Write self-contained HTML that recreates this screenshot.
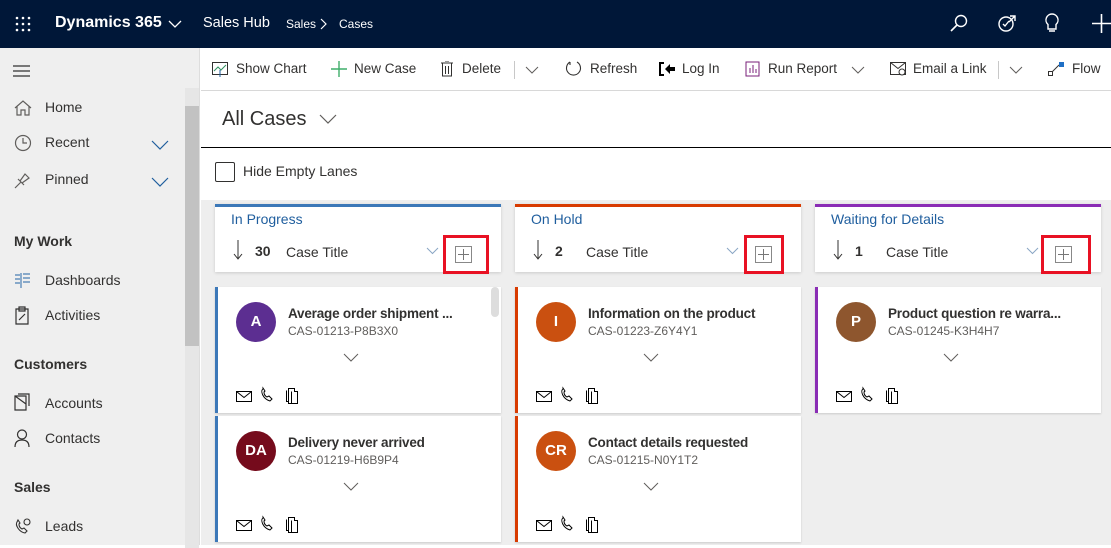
<!DOCTYPE html>
<html><head><meta charset="utf-8"><style>
*{margin:0;padding:0;box-sizing:border-box}
body{width:1111px;height:545px;overflow:hidden;position:relative;font-family:"Segoe UI","Liberation Sans",sans-serif;background:#fff;color:#323130}
.a{position:absolute}
.top{left:0;top:0;width:1111px;height:48px;background:#001738;color:#fff}
.side{left:0;top:48px;width:200px;height:497px;background:#efefef;border-right:1px solid #ddd}
.nav{position:absolute;left:45px;font-size:14px;color:#323130}
.sec{position:absolute;left:14px;font-size:14px;font-weight:bold;color:#323130}
.ico{position:absolute;left:14px}
.tb{left:201px;top:48px;width:910px;height:43px;border-bottom:1px solid #d8d8d8;font-size:13.5px}
.tb span{position:absolute;top:13px;white-space:nowrap}
.board{left:201px;top:200px;width:910px;height:345px;background:#eeeeee}
.lh{position:absolute;width:286px;height:68px;background:#fff;box-shadow:0 1px 3px rgba(0,0,0,.15)}
.lh .t{position:absolute;left:16px;top:4px;font-size:14px;color:#1f5e9e}
.lh .ar{position:absolute;left:18px;top:33px}
.lh .n{position:absolute;left:40px;top:36px;font-size:14px;font-weight:bold}
.lh .ct{position:absolute;left:71px;top:37px;font-size:14px}
.lh .dd{position:absolute;left:211px;top:40px}
.lh .rb{position:absolute;left:228px;top:28px;width:46px;height:39px;border:3px solid #e81123}
.lh .pl{position:absolute;left:240px;top:39px;width:17px;height:17px;border:1px solid #888}
.card{position:absolute;width:286px;height:126px;background:#fff;box-shadow:0 1px 2px rgba(0,0,0,.15)}
.av{position:absolute;left:18px;top:15px;width:40px;height:40px;border-radius:50%;color:#fff;font-weight:bold;font-size:15px;text-align:center;line-height:40px}
.ttl{position:absolute;left:70px;top:19px;font-size:13.5px;font-weight:bold;color:#323130;white-space:nowrap;letter-spacing:-0.2px}
.id{position:absolute;left:70px;top:37px;font-size:12px;color:#605e5c}
.cv{position:absolute;left:125px;top:66px}
.ic{position:absolute;top:99px;left:17px}
</style></head><body>
<div class="a top">
 <svg class="a" style="left:15px;top:16px" width="16" height="16"><g fill="#fff"><circle cx="2" cy="2" r="1.3"/><circle cx="8" cy="2" r="1.3"/><circle cx="14" cy="2" r="1.3"/><circle cx="2" cy="8" r="1.3"/><circle cx="8" cy="8" r="1.3"/><circle cx="14" cy="8" r="1.3"/><circle cx="2" cy="14" r="1.3"/><circle cx="8" cy="14" r="1.3"/><circle cx="14" cy="14" r="1.3"/></g></svg>
 <div class="a" style="left:55px;top:14px;font-size:16px;font-weight:bold">Dynamics 365</div>
 <svg class="a" style="left:168px;top:20px" width="14" height="9"><path d="M1 1l6 6 6-6" stroke="#fff" fill="none" stroke-width="1.3"/></svg>
 <div class="a" style="left:203px;top:15px;font-size:14.5px">Sales Hub</div>
 <div class="a" style="left:286px;top:17px;font-size:12px">Sales</div>
 <svg class="a" style="left:320px;top:18px" width="8" height="12"><path d="M1 1l5 5-5 5" stroke="#fff" fill="none" stroke-width="1.2"/></svg>
 <div class="a" style="left:339px;top:17px;font-size:12px">Cases</div>
 <svg class="a" style="left:950px;top:14px" width="18" height="18"><circle cx="11" cy="7" r="5.5" stroke="#fff" fill="none" stroke-width="1.4"/><path d="M7 11L1 17" stroke="#fff" stroke-width="1.6"/></svg>
 <svg class="a" style="left:997px;top:13px" width="20" height="20"><circle cx="9" cy="11" r="7" stroke="#fff" fill="none" stroke-width="1.4"/><path d="M6 11l2 2 4-5M13 3h5v5M18 3l-6 6" stroke="#fff" fill="none" stroke-width="1.4"/></svg>
 <svg class="a" style="left:1044px;top:13px" width="16" height="20"><path d="M8 1a6 6 0 0 0-4 10.5V16h8v-4.5A6 6 0 0 0 8 1zM5 18h6" stroke="#fff" fill="none" stroke-width="1.4"/></svg>
 <svg class="a" style="left:1092px;top:14px" width="19" height="19"><path d="M9.5 0v19M0 9.5h19" stroke="#fff" stroke-width="1.6"/></svg>
</div>
<div class="a side">
 <svg class="a" style="left:13px;top:17px" width="18" height="12"><path d="M0 1h17M0 6h17M0 11h17" stroke="#323130" stroke-width="1.2"/></svg>
 <div class="a" style="left:185px;top:40px;width:14px;height:460px;background:#e6e6e6"></div>
 <div class="a" style="left:185px;top:58px;width:14px;height:240px;background:#c2c2c2"></div>
 <svg class="ico" style="top:52px" width="18" height="16"><path d="M1 8L9 1l8 7M3 6v9h4v-5h4v5h4V6" stroke="#605e5c" fill="none" stroke-width="1.2"/></svg>
 <div class="nav" style="top:51px">Home</div>
 <svg class="ico" style="top:86px" width="18" height="18"><circle cx="9" cy="9" r="7.5" stroke="#605e5c" fill="none" stroke-width="1.2"/><path d="M9 4v5h4" stroke="#605e5c" fill="none" stroke-width="1.2"/></svg>
 <div class="nav" style="top:86px">Recent</div>
 <svg class="a" style="left:151px;top:92px" width="18" height="10"><path d="M1 1l8 8 8-8" stroke="#1f5e9e" fill="none" stroke-width="1.2"/></svg>
 <svg class="ico" style="top:123px" width="18" height="18"><path d="M1 17l6-6M4 8l6 6M6 10l5-7 4 4-7 5" stroke="#605e5c" fill="none" stroke-width="1.2"/></svg>
 <div class="nav" style="top:123px">Pinned</div>
 <svg class="a" style="left:151px;top:129px" width="18" height="10"><path d="M1 1l8 8 8-8" stroke="#1f5e9e" fill="none" stroke-width="1.2"/></svg>
 <div class="sec" style="top:185px">My Work</div>
 <svg class="ico" style="top:224px" width="17" height="17"><path d="M1 3h5M1 7h5M9 2h7M9 6h7M9 10h7M1 11h5M7 1v15" stroke="#4a7fb5" fill="none" stroke-width="1.2"/></svg>
 <div class="nav" style="top:224px">Dashboards</div>
 <svg class="ico" style="top:258px" width="16" height="19"><path d="M2 3h12v15H2zM5 1h6v4H5zM5 14l6-6" stroke="#323130" fill="none" stroke-width="1.2"/></svg>
 <div class="nav" style="top:259px">Activities</div>
 <div class="sec" style="top:308px">Customers</div>
 <svg class="ico" style="top:345px" width="16" height="18"><path d="M1 3h11v14H1zM4 1h11v12M1 3l11 8" stroke="#323130" fill="none" stroke-width="1.2"/></svg>
 <div class="nav" style="top:347px">Accounts</div>
 <svg class="ico" style="top:381px" width="16" height="18"><circle cx="8" cy="5.5" r="4.5" stroke="#323130" fill="none" stroke-width="1.2"/><path d="M1 18c0-5 3-7 7-7s7 2 7 7" stroke="#323130" fill="none" stroke-width="1.2"/></svg>
 <div class="nav" style="top:382px">Contacts</div>
 <div class="sec" style="top:431px">Sales</div>
 <svg class="ico" style="top:469px" width="18" height="18"><path d="M3 5c-2 3 2 10 8 11l2-2-3-3-2 1c-2-1-3-3-3-5l1-1-2-3z" stroke="#323130" fill="none" stroke-width="1.1"/><circle cx="13" cy="5" r="3" stroke="#323130" fill="none" stroke-width="1.1"/></svg>
 <div class="nav" style="top:470px">Leads</div>
</div>
<div class="a tb">
 <svg class="a" style="left:11px;top:14px" width="16" height="16"><rect x="0.5" y="0.5" width="15" height="12" stroke="#323130" fill="none"/><path d="M2 9l4-4 3 3 5-5" stroke="#2f8f5f" fill="none"/><path d="M8 15V8" stroke="#1f5e9e"/></svg>
 <span style="left:35px">Show Chart</span>
 <svg class="a" style="left:130px;top:13px" width="16" height="16"><path d="M8 0v16M0 8h16" stroke="#3fae6a" stroke-width="1.4"/></svg>
 <span style="left:153px">New Case</span>
 <svg class="a" style="left:240px;top:13px" width="12" height="16"><path d="M0 2h12M4 0h4M1.5 2v13h9V2M4.5 5v8M7.5 5v8" stroke="#323130" fill="none"/></svg>
 <span style="left:261px">Delete</span>
 <div class="a" style="left:313px;top:13px;width:1px;height:18px;background:#c8c8c8"></div>
 <svg class="a" style="left:324px;top:18px" width="14" height="8"><path d="M1 1l6 6 6-6" stroke="#605e5c" fill="none"/></svg>
 <svg class="a" style="left:364px;top:12px" width="17" height="17"><path d="M5 2A7 7 0 1 0 12 2M5 2v3" stroke="#323130" fill="none" stroke-width="1.1"/></svg>
 <span style="left:389px">Refresh</span>
 <svg class="a" style="left:458px;top:14px" width="17" height="14"><path d="M5 1H1v12h4" stroke="#000" fill="none" stroke-width="2"/><path d="M6 7l5-5v3h5v4h-5v3z" fill="#000"/></svg>
 <span style="left:481px">Log In</span>
 <svg class="a" style="left:544px;top:13px" width="15" height="16"><rect x="1" y="1" width="13" height="14" stroke="#7a1f7a" fill="none"/><path d="M5 12V7M8 12V4M11 12V8" stroke="#7a1f7a"/></svg>
 <span style="left:567px">Run Report</span>
 <svg class="a" style="left:650px;top:18px" width="14" height="8"><path d="M1 1l6 6 6-6" stroke="#605e5c" fill="none"/></svg>
 <svg class="a" style="left:689px;top:14px" width="17" height="14"><path d="M0.5 0.5h15v12h-15zM0.5 0.5l7.5 6 7.5-6" stroke="#323130" fill="none"/><circle cx="12" cy="10" r="3" stroke="#323130" fill="#fff"/></svg>
 <span style="left:712px">Email a Link</span>
 <div class="a" style="left:797px;top:13px;width:1px;height:18px;background:#c8c8c8"></div>
 <svg class="a" style="left:808px;top:18px" width="14" height="8"><path d="M1 1l6 6 6-6" stroke="#605e5c" fill="none"/></svg>
 <svg class="a" style="left:847px;top:14px" width="16" height="14"><rect x="0.5" y="9.5" width="4" height="4" stroke="#323130" fill="none"/><path d="M4 10l7-7" stroke="#323130"/><rect x="11" y="0" width="5" height="5" fill="#1f6fc5"/></svg>
 <span style="left:871px">Flow</span>
</div>
<div class="a" style="left:222px;top:108px;font-size:20px;color:#323130">All Cases</div>
<svg class="a" style="left:319px;top:114px" width="18" height="10"><path d="M1 1l8 8 8-8" stroke="#605e5c" fill="none" stroke-width="1.2"/></svg>
<div class="a" style="left:201px;top:147px;width:910px;height:1px;background:#000"></div>
<div class="a" style="left:215px;top:162px;width:20px;height:20px;border:1px solid #323130;border-radius:2px"></div>
<div class="a" style="left:243px;top:163px;font-size:14px">Hide Empty Lanes</div>
<div class="a board">
 <div class="lh" style="left:14px;top:4px;border-top:3px solid #3c78b8"><div class="t">In Progress</div><svg class="ar" width="10" height="20"><path d="M5 0v19M1 14l4 5 4-5" stroke="#323130" fill="none"/></svg><div class="n">30</div><div class="ct">Case Title</div><svg class="dd" width="13" height="8"><path d="M1 1l5.5 5.5L12 1" stroke="#8aa6c4" fill="none"/></svg><div class="rb"></div><div class="pl"><svg width="15" height="15" style="position:absolute;left:0;top:0"><path d="M7.5 2v11M2 7.5h11" stroke="#777"/></svg></div></div>
 <div class="lh" style="left:314px;top:4px;border-top:3px solid #d83b01"><div class="t">On Hold</div><svg class="ar" width="10" height="20"><path d="M5 0v19M1 14l4 5 4-5" stroke="#323130" fill="none"/></svg><div class="n">2</div><div class="ct">Case Title</div><svg class="dd" width="13" height="8"><path d="M1 1l5.5 5.5L12 1" stroke="#8aa6c4" fill="none"/></svg><div class="rb" style="left:229px;width:40px"></div><div class="pl"><svg width="15" height="15" style="position:absolute;left:0;top:0"><path d="M7.5 2v11M2 7.5h11" stroke="#777"/></svg></div></div>
 <div class="lh" style="left:614px;top:4px;border-top:3px solid #8a2db5"><div class="t">Waiting for Details</div><svg class="ar" width="10" height="20"><path d="M5 0v19M1 14l4 5 4-5" stroke="#323130" fill="none"/></svg><div class="n">1</div><div class="ct">Case Title</div><svg class="dd" width="13" height="8"><path d="M1 1l5.5 5.5L12 1" stroke="#8aa6c4" fill="none"/></svg><div class="rb" style="left:226px;width:50px"></div><div class="pl"><svg width="15" height="15" style="position:absolute;left:0;top:0"><path d="M7.5 2v11M2 7.5h11" stroke="#777"/></svg></div></div>

 <div class="card" style="left:14px;top:87px;border-left:3px solid #3c78b8"><div class="av" style="background:#5c2e91">A</div><div class="ttl">Average order shipment ...</div><div class="id">CAS-01213-P8B3X0</div><svg class="cv" width="16" height="9"><path d="M1 1l7 7 7-7" stroke="#605e5c" fill="none"/></svg><svg class="ic" width="75" height="18"><path d="M1.5 5.5h15v10h-15zM1.5 5.5l7.5 6 7.5-6" stroke="#000" fill="none"/><path d="M28 3c-3 2 0 10 7 12l2-2-3-3-2 1c-2-1-3-3-3-5l1-1-2-3z" stroke="#000" fill="none"/><path d="M53.5 2.5h6v3h3v12h-9z M56.5 5.5v12" stroke="#000" fill="none"/><path d="M51.5 4.5v11h2" stroke="#000" fill="none"/></svg><div class="a" style="right:2px;top:0;width:8px;height:30px;background:#ddd;border-radius:4px"></div></div>
 <div class="card" style="left:14px;top:216px;border-left:3px solid #3c78b8"><div class="av" style="background:#750b1c">DA</div><div class="ttl">Delivery never arrived</div><div class="id">CAS-01219-H6B9P4</div><svg class="cv" width="16" height="9"><path d="M1 1l7 7 7-7" stroke="#605e5c" fill="none"/></svg><svg class="ic" width="75" height="18"><path d="M1.5 5.5h15v10h-15zM1.5 5.5l7.5 6 7.5-6" stroke="#000" fill="none"/><path d="M28 3c-3 2 0 10 7 12l2-2-3-3-2 1c-2-1-3-3-3-5l1-1-2-3z" stroke="#000" fill="none"/><path d="M53.5 2.5h6v3h3v12h-9z M56.5 5.5v12" stroke="#000" fill="none"/><path d="M51.5 4.5v11h2" stroke="#000" fill="none"/></svg></div>
 <div class="card" style="left:314px;top:87px;border-left:3px solid #d83b01"><div class="av" style="background:#ca5010">I</div><div class="ttl">Information on the product</div><div class="id">CAS-01223-Z6Y4Y1</div><svg class="cv" width="16" height="9"><path d="M1 1l7 7 7-7" stroke="#605e5c" fill="none"/></svg><svg class="ic" width="75" height="18"><path d="M1.5 5.5h15v10h-15zM1.5 5.5l7.5 6 7.5-6" stroke="#000" fill="none"/><path d="M28 3c-3 2 0 10 7 12l2-2-3-3-2 1c-2-1-3-3-3-5l1-1-2-3z" stroke="#000" fill="none"/><path d="M53.5 2.5h6v3h3v12h-9z M56.5 5.5v12" stroke="#000" fill="none"/><path d="M51.5 4.5v11h2" stroke="#000" fill="none"/></svg></div>
 <div class="card" style="left:314px;top:216px;border-left:3px solid #d83b01"><div class="av" style="background:#ca5010">CR</div><div class="ttl">Contact details requested</div><div class="id">CAS-01215-N0Y1T2</div><svg class="cv" width="16" height="9"><path d="M1 1l7 7 7-7" stroke="#605e5c" fill="none"/></svg><svg class="ic" width="75" height="18"><path d="M1.5 5.5h15v10h-15zM1.5 5.5l7.5 6 7.5-6" stroke="#000" fill="none"/><path d="M28 3c-3 2 0 10 7 12l2-2-3-3-2 1c-2-1-3-3-3-5l1-1-2-3z" stroke="#000" fill="none"/><path d="M53.5 2.5h6v3h3v12h-9z M56.5 5.5v12" stroke="#000" fill="none"/><path d="M51.5 4.5v11h2" stroke="#000" fill="none"/></svg></div>
 <div class="card" style="left:614px;top:87px;border-left:3px solid #8a2db5"><div class="av" style="background:#8e562e">P</div><div class="ttl">Product question re warra...</div><div class="id">CAS-01245-K3H4H7</div><svg class="cv" width="16" height="9"><path d="M1 1l7 7 7-7" stroke="#605e5c" fill="none"/></svg><svg class="ic" width="75" height="18"><path d="M1.5 5.5h15v10h-15zM1.5 5.5l7.5 6 7.5-6" stroke="#000" fill="none"/><path d="M28 3c-3 2 0 10 7 12l2-2-3-3-2 1c-2-1-3-3-3-5l1-1-2-3z" stroke="#000" fill="none"/><path d="M53.5 2.5h6v3h3v12h-9z M56.5 5.5v12" stroke="#000" fill="none"/><path d="M51.5 4.5v11h2" stroke="#000" fill="none"/></svg></div>
</div>
</body></html>
